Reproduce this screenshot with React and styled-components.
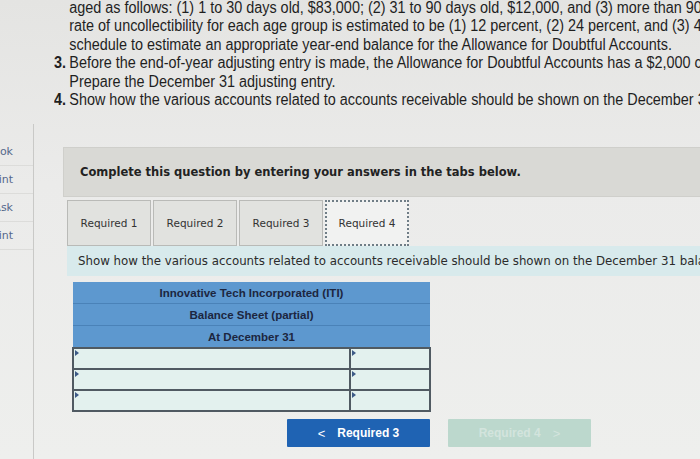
import React from 'react';
import styled, { createGlobalStyle } from 'styled-components';

const GlobalStyle = createGlobalStyle`
  html, body {
    margin: 0;
    padding: 0;
    background: #e6e6e4;
  }
`;

const Page = styled.div`
  width: 700px;
  height: 459px;
  overflow: hidden;
  background: linear-gradient(180deg, #e4e4e2 0%, #ebebea 40%, #eeefed 100%);
  font-family: "DejaVu Sans", Verdana, sans-serif;
`;

// the print in the shot is a condensed face, so squeeze Liberation Sans
const Instructions = styled.div`
  height: 124px;
  overflow: hidden;
`;

const InstructionText = styled.div`
  width: 780px;
  padding-left: 77px;
  margin-top: -1px;
  transform: scaleX(0.9);
  transform-origin: 0 0;
  font-family: "Liberation Sans", Arial, sans-serif;
  font-size: 16px;
  line-height: 18.4px;
  color: #1f1f1f;
  white-space: nowrap;
`;

const Line = styled.div``;

const Num = styled.span`
  display: inline-block;
  width: 17px;
  margin-left: -17px;
  font-weight: bold;
`;

const Body = styled.div`
  display: flex;
  height: 335px;
`;

const Sidebar = styled.div`
  width: 33px;
  flex-shrink: 0;
  border-right: 1px solid #c9c9c7;
  padding-top: 14px;
  display: flex;
  flex-direction: column;
`;

const SideItem = styled.div`
  height: 27px;
  line-height: 27px;
  padding-right: 20px;
  font-size: 11px;
  color: #55688a;
  text-align: right;
  overflow: hidden;
  white-space: nowrap;
  direction: rtl;
  border-bottom: 1px solid #dcdcda;
`;

const Main = styled.div`
  flex: 1;
  padding-left: 29px;
  padding-top: 23px;
  display: flex;
  flex-direction: column;
  min-width: 0;
`;

const CompleteBox = styled.div`
  height: 48px;
  background: #d9d9d5;
  border: 1px solid #cfcfcb;
  border-right: none;
  display: flex;
  align-items: center;
  padding-left: 16px;
  font-size: 11.5px;
  font-weight: bold;
  color: #222;
  white-space: nowrap;
`;

const Panel = styled.div`
  margin-left: 4px;
  margin-top: 3px;
`;

const Tabs = styled.div`
  display: flex;
  gap: 2px;
`;

const Tab = styled.div`
  width: ${(p) => (p.$active ? '80px' : '82px')};
  height: ${(p) => (p.$active ? '42px' : '44px')};
  display: flex;
  align-items: center;
  justify-content: center;
  font-size: 10.5px;
  color: #333;
  background: ${(p) => (p.$active ? '#f1f2f1' : '#e1e2df')};
  border: ${(p) => (p.$active ? '2px dotted #6f7d86' : '1px solid #b9bab7')};
`;

const Band = styled.div`
  height: 30px;
  background: #d8eaec;
  display: flex;
  align-items: center;
  padding-left: 11px;
  font-size: 11.8px;
  color: #2b2b2b;
  white-space: nowrap;
  overflow: hidden;
`;

const Table = styled.table`
  margin: 6px 0 0 5px;
  width: 359px;
  border-collapse: collapse;
  font-family: "Liberation Sans", Arial, sans-serif;
`;

const HeadCell = styled.td`
  height: 21px;
  padding: 0;
  background: #5d98cf;
  border-bottom: 1px solid #4a82b8;
  text-align: center;
  font-size: 11.5px;
  font-weight: bold;
  color: #1c2640;
`;

const InputCell = styled.td`
  position: relative;
  height: 19px;
  width: ${(p) => p.$w};
  background: #e3f1ee;
  border: 2px solid #505a62;
  padding: 0;

  &::before {
    content: '';
    position: absolute;
    left: 1px;
    top: 1px;
    border-left: 4px solid #3d5a86;
    border-top: 3px solid transparent;
    border-bottom: 3px solid transparent;
  }
`;

const Buttons = styled.div`
  display: flex;
  gap: 18px;
  margin: 7px 0 0 220px;
`;

const NavButton = styled.div`
  width: 143px;
  height: 28px;
  display: flex;
  align-items: center;
  justify-content: center;
  gap: 12px;
  font-family: "Liberation Sans", Arial, sans-serif;
  font-size: 12px;
  font-weight: bold;
  color: ${(p) => (p.$disabled ? '#d3e4dd' : '#ffffff')};
  background: ${(p) => (p.$disabled ? '#bcd8cd' : '#1f63b3')};
  border-radius: 1px;
`;

const Chevron = styled.span`
  font-size: 13px;
  font-weight: normal;
`;

export default function App() {
  return (
    <Page>
      <GlobalStyle />
      <Instructions>
        <InstructionText>
          <Line>aged as follows: (1) 1 to 30 days old, $83,000; (2) 31 to 90 days old, $12,000, and (3) more than 90 days old, $5,000.</Line>
          <Line>rate of uncollectibility for each age group is estimated to be (1) 12 percent, (2) 24 percent, and (3) 48 percent.</Line>
          <Line>schedule to estimate an appropriate year-end balance for the Allowance for Doubtful Accounts.</Line>
          <Line><Num>3.</Num>Before the end-of-year adjusting entry is made, the Allowance for Doubtful Accounts has a $2,000 credit balance.</Line>
          <Line>Prepare the December 31 adjusting entry.</Line>
          <Line><Num>4.</Num>Show how the various accounts related to accounts receivable should be shown on the December 31 balance sheet.</Line>
        </InstructionText>
      </Instructions>
      <Body>
        <Sidebar>
          <SideItem>eBook</SideItem>
          <SideItem>Hint</SideItem>
          <SideItem>Ask</SideItem>
          <SideItem>Print</SideItem>
        </Sidebar>
        <Main>
          <CompleteBox>Complete this question by entering your answers in the tabs below.</CompleteBox>
          <Panel>
            <Tabs>
              <Tab>Required 1</Tab>
              <Tab>Required 2</Tab>
              <Tab>Required 3</Tab>
              <Tab $active>Required 4</Tab>
            </Tabs>
            <Band>Show how the various accounts related to accounts receivable should be shown on the December 31 balance sheet.</Band>
            <Table>
              <tbody>
                <tr><HeadCell colSpan={2}>Innovative Tech Incorporated (ITI)</HeadCell></tr>
                <tr><HeadCell colSpan={2}>Balance Sheet (partial)</HeadCell></tr>
                <tr><HeadCell colSpan={2}>At December 31</HeadCell></tr>
                {[0, 1, 2].map((i) => (
                  <tr key={i}>
                    <InputCell $w="280px" />
                    <InputCell $w="79px" />
                  </tr>
                ))}
              </tbody>
            </Table>
            <Buttons>
              <NavButton><Chevron>&lt;</Chevron>Required 3</NavButton>
              <NavButton $disabled>Required 4<Chevron>&gt;</Chevron></NavButton>
            </Buttons>
          </Panel>
        </Main>
      </Body>
    </Page>
  );
}
